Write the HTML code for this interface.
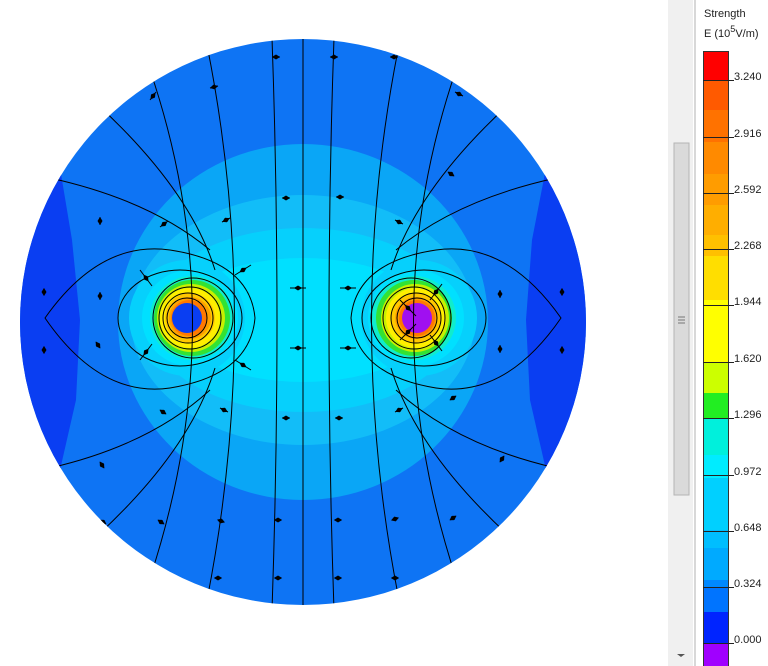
<!DOCTYPE html>
<html><head><meta charset="utf-8"><style>
html,body{margin:0;padding:0;width:768px;height:666px;overflow:hidden;background:#fff;font-family:"Liberation Sans",sans-serif}
svg{position:absolute;left:0;top:0}
</style></head><body>
<svg width="768" height="666" viewBox="0 0 768 666" xmlns="http://www.w3.org/2000/svg">
<defs>
<clipPath id="c"><circle cx="303" cy="322" r="283"/></clipPath>
<marker id="a" viewBox="0 0 10 6" refX="5" refY="3" markerWidth="9" markerHeight="5" orient="auto" markerUnits="userSpaceOnUse"><path d="M0,3 L5,0 L10,3 L5,6Z" fill="#000"/></marker>
</defs>
<g clip-path="url(#c)">
<rect x="0" y="0" width="620" height="666" fill="#0e74f4"/>
<path d="M0,150 L60,168 L72,240 L80,320 L76,400 L60,470 L0,490Z" fill="#0a3ef2"/>
<path d="M620,150 L546,168 L532,240 L526,320 L530,400 L546,470 L620,490Z" fill="#0a3ef2"/>
<ellipse cx="303" cy="322" rx="185" ry="178" fill="#0aa6f6"/>
<ellipse cx="303" cy="320" rx="172" ry="125" fill="#12bdf8"/>
<ellipse cx="303" cy="320" rx="155" ry="92" fill="#06d0fc"/>
<ellipse cx="303" cy="320" rx="130" ry="62" fill="#00e0ff"/>
<g id="L">
<circle cx="187" cy="318" r="58" fill="#06d0fc"/>
<circle cx="190" cy="318" r="48" fill="#00e0ff"/>
<circle cx="192" cy="318" r="42" fill="#10eccc"/>
<circle cx="192" cy="318" r="38" fill="#33e233"/>
<circle cx="191" cy="318" r="34" fill="#c8f000"/>
<circle cx="190" cy="318" r="30" fill="#ffee00"/>
<circle cx="190" cy="318" r="25" fill="#ffc800"/>
<circle cx="190" cy="318" r="21" fill="#ffa000"/>
<circle cx="189" cy="318" r="18" fill="#ff7800"/>
</g>
<use href="#L" transform="translate(606,0) scale(-1,1)"/>
<circle cx="187" cy="318" r="15" fill="#0a3ef2"/>
<circle cx="417" cy="318" r="15" fill="#a010f0"/>
<g fill="none" stroke="#000" stroke-width="1">
<circle cx="187" cy="318" r="20"/><circle cx="188" cy="318" r="25"/><circle cx="190" cy="318" r="31"/><circle cx="193" cy="318" r="40"/>
<circle cx="417" cy="318" r="20"/><circle cx="416" cy="318" r="25"/><circle cx="414" cy="318" r="31"/><circle cx="411" cy="318" r="40"/>
<ellipse cx="180" cy="318" rx="62" ry="48"/><ellipse cx="424" cy="318" rx="62" ry="48"/>
<path d="M45,318 Q100,240 170,250 Q250,262 255,318 Q250,375 170,388 Q100,398 45,318Z"/>
<path d="M561,318 Q506,240 436,250 Q356,262 351,318 Q356,375 436,388 Q506,398 561,318Z"/>
<path d="M50,178 Q150,200 210,250"/><path d="M50,468 Q150,445 210,390"/>
<path d="M556,178 Q456,200 396,250"/><path d="M556,468 Q456,445 396,390"/>
<path d="M303,30 L303,620"/>
<path d="M272,38 Q282,320 272,610"/><path d="M334,38 Q324,320 334,610"/>
<path d="M207,45 Q262,320 207,600"/><path d="M399,45 Q344,320 399,600"/>
<path d="M150,70 Q235,320 150,578"/><path d="M456,70 Q371,320 456,578"/>
<path d="M98,105 Q190,190 215,270"/><path d="M98,535 Q190,450 215,368"/>
<path d="M508,105 Q416,190 391,270"/><path d="M508,535 Q416,450 391,368"/>
</g>
<g stroke="#000" stroke-width="1" marker-mid="url(#a)">
<path d="M150,100 l3,-4 l3,-4"/><path d="M210,88 l4,-1 l4,-1"/><path d="M272,57 l4,0 l4,0"/><path d="M330,57 l4,0 l4,0"/><path d="M390,57 l4,0 l4,0"/><path d="M455,92 l4,2 l4,2"/>
<path d="M100,225 l0,-4 l0,-4"/><path d="M160,227 l4,-3 l4,-3"/><path d="M222,222 l4,-2 l4,-2"/><path d="M282,198 l4,0 l4,0"/><path d="M336,197 l4,0 l4,0"/><path d="M395,220 l4,2 l4,2"/><path d="M448,172 l3,2 l3,2"/>
<path d="M96,342 l2,3 l2,3"/><path d="M44,290 l0,2 l0,2"/><path d="M44,348 l0,2 l0,2"/><path d="M562,290 l0,2 l0,2"/><path d="M562,348 l0,2 l0,2"/>
<path d="M140,270 l6,8 l6,8"/><path d="M235,275 l8,-5 l8,-5"/><path d="M140,360 l6,-8 l6,-8"/><path d="M235,360 l8,5 l8,5"/>
<path d="M290,288 l8,0 l8,0"/><path d="M340,288 l8,0 l8,0"/><path d="M290,348 l8,0 l8,0"/><path d="M340,348 l8,0 l8,0"/>
<path d="M400,340 l8,-8 l8,-8"/><path d="M400,300 l8,8 l8,8"/><path d="M430,300 l6,-8 l6,-8"/><path d="M430,335 l6,8 l6,8"/>
<path d="M500,290 l0,4 l0,4"/><path d="M500,345 l0,4 l0,4"/><path d="M100,300 l0,-4 l0,-4"/>
<path d="M100,462 l2,3 l2,3"/><path d="M160,410 l3,2 l3,2"/><path d="M220,408 l4,2 l4,2"/><path d="M282,418 l4,0 l4,0"/><path d="M335,418 l4,0 l4,0"/><path d="M395,412 l4,-2 l4,-2"/><path d="M450,400 l3,-2 l3,-2"/><path d="M500,462 l2,-3 l2,-3"/>
<path d="M100,520 l3,2 l3,2"/><path d="M158,520 l3,2 l3,2"/><path d="M218,520 l3,1 l3,1"/><path d="M275,520 l3,0 l3,0"/><path d="M335,520 l3,0 l3,0"/><path d="M392,520 l3,-1 l3,-1"/><path d="M450,520 l3,-2 l3,-2"/>
<path d="M215,578 l3,0 l3,0"/><path d="M275,578 l3,0 l3,0"/><path d="M335,578 l3,0 l3,0"/><path d="M392,578 l3,0 l3,0"/>
</g>
</g>
<rect x="668" y="0" width="25" height="666" fill="#f0f0f0"/>
<rect x="674" y="143" width="15" height="352" fill="#dadada" stroke="#b4b4b4"/>
<path d="M678,317h7M678,320h7M678,323h7" stroke="#777"/>
<path d="M677,654l4,3l4,-3z" fill="#555"/>
<rect x="694" y="0" width="2" height="666" fill="#d8d8d8"/>
<text x="704" y="17" font-size="11" fill="#222">Strength</text>
<text x="704" y="37" font-size="11" fill="#222">E (10<tspan dy="-5" font-size="9">5</tspan><tspan dy="5">V/m)</tspan></text>
<g>
<rect x="703" y="51" width="26" height="29" fill="#ff0000"/>
<rect x="703" y="80" width="26" height="30" fill="#ff5a00"/>
<rect x="703" y="110" width="26" height="32" fill="#ff7200"/>
<rect x="703" y="142" width="26" height="32" fill="#ff8a00"/>
<rect x="703" y="174" width="26" height="31" fill="#ff9c00"/>
<rect x="703" y="205" width="26" height="30" fill="#ffae00"/>
<rect x="703" y="235" width="26" height="21" fill="#ffc000"/>
<rect x="703" y="256" width="26" height="44" fill="#ffde00"/>
<rect x="703" y="300" width="26" height="62" fill="#ffff00"/>
<rect x="703" y="362" width="26" height="31" fill="#ccff00"/>
<rect x="703" y="393" width="26" height="25" fill="#22ee22"/>
<rect x="703" y="418" width="26" height="37" fill="#00f0dc"/>
<rect x="703" y="455" width="26" height="23" fill="#00ecff"/>
<rect x="703" y="478" width="26" height="52" fill="#00d0ff"/>
<rect x="703" y="530" width="26" height="18" fill="#00beff"/>
<rect x="703" y="548" width="26" height="32" fill="#00aaff"/>
<rect x="703" y="580" width="26" height="8" fill="#0088ff"/>
<rect x="703" y="588" width="26" height="24" fill="#0074ff"/>
<rect x="703" y="612" width="26" height="31" fill="#0024ff"/>
<rect x="703" y="643" width="26" height="23" fill="#a000ff"/>
<rect x="703.5" y="51.5" width="25" height="620" fill="none" stroke="#333"/>
</g>
<g stroke="#222"><path d="M703,80.5h31M703,137.5h31M703,193.5h31M703,249.5h31M703,305.5h31M703,362.5h31M703,418.5h31M703,475.5h31M703,531.5h31M703,587.5h31M703,643.5h31"/></g>
<g font-size="11" fill="#222">
<text x="734" y="80">3.240</text><text x="734" y="137">2.916</text><text x="734" y="193">2.592</text><text x="734" y="249">2.268</text><text x="734" y="305">1.944</text><text x="734" y="362">1.620</text><text x="734" y="418">1.296</text><text x="734" y="475">0.972</text><text x="734" y="531">0.648</text><text x="734" y="587">0.324</text><text x="734" y="643">0.000</text>
</g>
</svg>
</body></html>
